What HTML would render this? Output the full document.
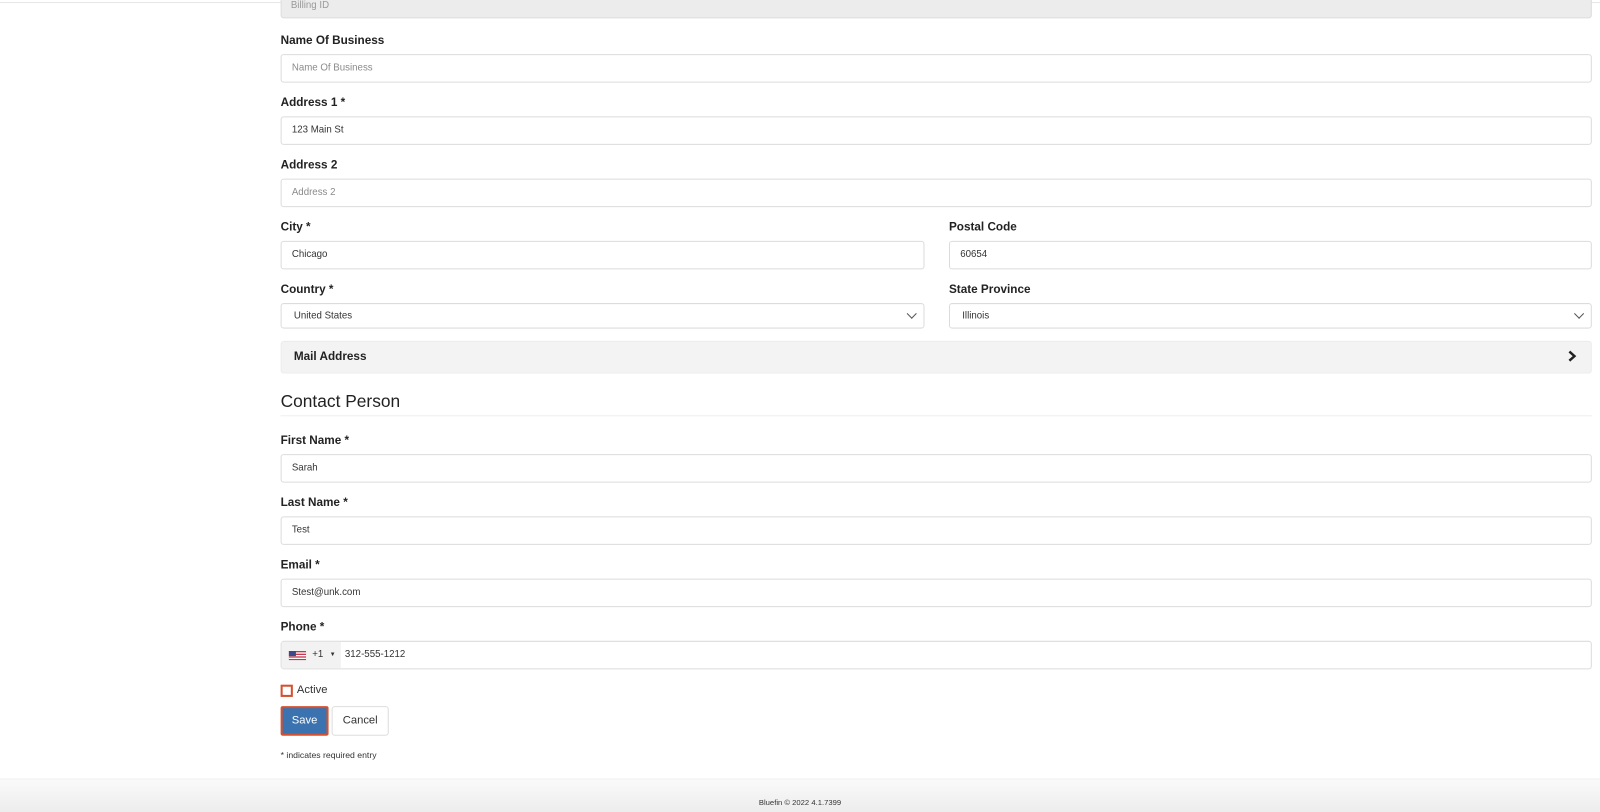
<!DOCTYPE html>
<html><head><meta charset="utf-8"><style>
*{box-sizing:border-box;margin:0;padding:0}
html,body{width:1600px;height:812px;overflow:hidden;background:#fff}
#w{width:1568px;height:796px;position:relative;transform:scale(1.0204);transform-origin:0 0;font-family:"Liberation Sans",Arial,sans-serif;color:#222}
.a{position:absolute}
.lbl{position:absolute;font-size:11.5px;font-weight:bold;color:#222}
.in{position:absolute;height:28px;border:1px solid #dcdcdc;border-radius:3px;background:#fff;font-size:9.5px;color:#333;padding-left:10px;line-height:26px}
.ph{color:#8a8a8a}
.chev{position:absolute;right:8px;top:9px;width:7px;height:7px;border-right:1px solid #555;border-bottom:1px solid #555;transform:rotate(45deg)}
</style></head><body><div id="w">
<div class="a" style="left:0;top:2px;width:1568px;height:1px;background:#e6e6e6"></div>
<div class="in ph" style="left:275px;top:-10px;width:1285px;height:28px;background:#ececec">&nbsp;</div>
<div class="a" style="left:285px;top:0px;font-size:9.5px;color:#999">Billing ID</div>

<div class="lbl" style="left:275px;top:34px">Name Of Business</div>
<div class="in ph" style="left:275px;top:53px;width:1285px">Name Of Business</div>
<div class="lbl" style="left:275px;top:95px">Address 1 *</div>
<div class="in" style="left:275px;top:114px;width:1285px">123 Main St</div>
<div class="lbl" style="left:275px;top:156px">Address 2</div>
<div class="in ph" style="left:275px;top:175px;width:1285px">Address 2</div>
<div class="lbl" style="left:275px;top:217px">City *</div>
<div class="in" style="left:275px;top:236px;width:631px">Chicago</div>
<div class="lbl" style="left:930px;top:217px">Postal Code</div>
<div class="in" style="left:930px;top:236px;width:630px">60654</div>
<div class="lbl" style="left:275px;top:278px">Country *</div>
<div class="in" style="left:275px;top:297px;width:631px;height:25px;line-height:23px;padding-left:12px">United States<span class="chev" style="top:6px"></span></div>
<div class="lbl" style="left:930px;top:278px">State Province</div>
<div class="in" style="left:930px;top:297px;width:630px;height:25px;line-height:23px;padding-left:12px">Illinois<span class="chev" style="top:6px"></span></div>

<div class="a" style="left:275px;top:334px;width:1285px;height:32px;background:#f3f3f3;border:1px solid #ececec;border-radius:3px"></div>
<div class="lbl" style="left:288px;top:344px">Mail Address</div>
<svg class="a" style="left:1536px;top:343px" width="10" height="12" viewBox="0 0 10 12"><path d="M2 1.5 L7 6 L2 10.5" stroke="#222" stroke-width="2.4" fill="none"/></svg>

<div class="a" style="left:275px;top:384px;font-size:17px;color:#222">Contact Person</div>
<div class="a" style="left:275px;top:407px;width:1285px;height:1px;background:#eee"></div>

<div class="lbl" style="left:275px;top:426px">First Name *</div>
<div class="in" style="left:275px;top:445px;width:1285px">Sarah</div>
<div class="lbl" style="left:275px;top:487px">Last Name *</div>
<div class="in" style="left:275px;top:506px;width:1285px">Test</div>
<div class="lbl" style="left:275px;top:548px">Email *</div>
<div class="in" style="left:275px;top:567px;width:1285px">Stest@unk.com</div>
<div class="lbl" style="left:275px;top:609px">Phone *</div>
<div class="in" style="left:275px;top:628px;width:1285px;padding-left:0">
 <div style="position:absolute;left:0;top:0;width:58px;height:26px;background:#f2f2f2"></div>
 <svg style="position:absolute;left:7px;top:9px" width="17" height="9" viewBox="0 0 17 9"><rect width="17" height="9" fill="#c0394b"/><rect y="1.3" width="17" height="1.3" fill="#fff"/><rect y="3.9" width="17" height="1.3" fill="#fff"/><rect y="6.5" width="17" height="1.3" fill="#fff"/><rect width="7" height="5" fill="#3c4a8a"/></svg>
 <span style="position:absolute;left:30px;top:0;font-size:9.5px">+1</span>
 <span style="position:absolute;left:47px;top:0;font-size:6px">▼</span>
 <span style="position:absolute;left:62px;top:0">312-555-1212</span>
</div>

<div class="a" style="left:275px;top:671px;width:12px;height:12px;border:2px solid #d5502f;background:#fff"></div>
<div class="a" style="left:291px;top:670px;font-size:11px;color:#333">Active</div>
<div class="a" style="left:275px;top:692px;width:47px;height:29px;background:#3b73b0;border:2px solid #d5502f;border-radius:2px;color:#fff;font-size:11px;text-align:center;line-height:25px">Save</div>
<div class="a" style="left:325px;top:692px;width:56px;height:29px;background:#fff;border:1px solid #ddd;border-radius:3px;color:#333;font-size:11px;text-align:center;line-height:27px">Cancel</div>
<div class="a" style="left:275px;top:735px;font-size:8.5px;color:#333">* indicates required entry</div>

<div class="a" style="left:0;top:763px;width:1568px;height:1px;background:#eee"></div>
<div class="a" style="left:0;top:764px;width:1568px;height:33px;background:linear-gradient(180deg,#fafafa,#ececec)"></div>
<div class="a" style="left:0;top:782px;width:1568px;text-align:center;font-size:7.5px;color:#333">Bluefin © 2022 4.1.7399</div>
</div></body></html>
